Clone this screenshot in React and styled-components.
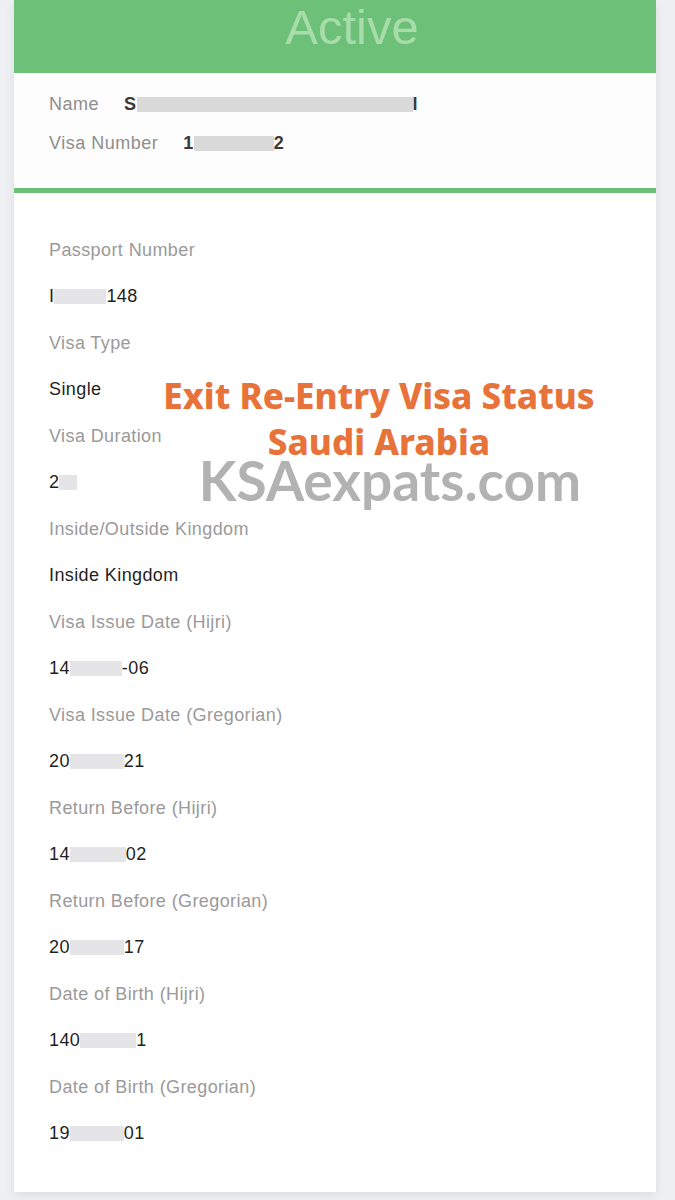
import React from "react";
import styled, { createGlobalStyle } from "styled-components";

const GlobalStyle = createGlobalStyle`
  html, body {
    margin: 0;
    padding: 0;
    background: #eff0f3;
  }
  body {
    font-family: "Liberation Sans", Arial, sans-serif;
  }
`;

const Page = styled.div`
  width: 675px;
  min-height: 1200px;
  padding: 0 19px 0 14px;
  box-sizing: border-box;
`;

const Card = styled.div`
  position: relative;
  background: #ffffff;
  box-shadow: 0 4px 10px rgba(0, 0, 0, 0.08);
`;

const StatusBar = styled.div`
  height: 73px;
  box-sizing: border-box;
  background: #6cc077;
  color: #a8dcaa;
  font-size: 49px;
  line-height: 55px;
  text-align: center;
  padding-left: 34px;
`;

const Summary = styled.div`
  background: #fcfdfc;
  padding: 12px 35px 25px;
  border-bottom: 5px solid #6cc077;
`;

const SummaryRow = styled.div`
  display: flex;
  align-items: center;
  gap: 25px;
  height: 39px;
  font-size: 18px;
  letter-spacing: 0.5px;
`;

const SummaryLabel = styled.span`
  color: #8e8e8e;
`;

const SummaryValue = styled.span`
  color: #3a3a3a;
  font-weight: bold;
  display: inline-flex;
  align-items: center;
`;

const Details = styled.div`
  position: relative;
  padding: 34px 35px 35px;
`;

const Line = styled.div`
  height: 46.5px;
  display: flex;
  align-items: center;
  font-size: 18px;
  letter-spacing: 0.4px;
  color: ${(p) => (p.$label ? "#9a9a9a" : "#1f1f1f")};
`;

const Redact = styled.span`
  display: inline-block;
  width: ${(p) => p.$w}px;
  height: 15px;
  background: ${(p) => p.$tone || "#e5e5e8"};
`;

const Watermark = styled.div`
  position: absolute;
  top: 180px;
  left: 85px;
  width: 560px;
  text-align: center;
  pointer-events: none;
`;

const Headline = styled.div`
  color: #e8733a;
  font-family: "Noto Sans", "DejaVu Sans", sans-serif;
  font-weight: 800;
  font-size: 35px;
  line-height: 46px;
`;

const Site = styled.div`
  color: #b2b2b2;
  font-family: Lato, "Open Sans", sans-serif;
  font-weight: 700;
  font-size: 55px;
  line-height: 30px;
  margin-left: 22px;
`;

const fields = [
  ["Passport Number", [["I", 0], [null, 52], ["148", 0]]],
  ["Visa Type", [["Single", 0]]],
  ["Visa Duration", [["2", 0], [null, 18]]],
  ["Inside/Outside Kingdom", [["Inside Kingdom", 0]]],
  ["Visa Issue Date (Hijri)", [["14", 0], [null, 52], ["-06", 0]]],
  ["Visa Issue Date (Gregorian)", [["20", 0], [null, 54], ["21", 0]]],
  ["Return Before (Hijri)", [["14", 0], [null, 56], ["02", 0]]],
  ["Return Before (Gregorian)", [["20", 0], [null, 54], ["17", 0]]],
  ["Date of Birth (Hijri)", [["140", 0], [null, 56], ["1", 0]]],
  ["Date of Birth (Gregorian)", [["19", 0], [null, 54], ["01", 0]]],
];

const renderParts = (parts, tone) =>
  parts.map(([text, w], i) =>
    text === null ? <Redact key={i} $w={w} $tone={tone} /> : <span key={i}>{text}</span>
  );

const App = () => {
  return (
    <Page>
      <GlobalStyle />
      <Card>
        <StatusBar>Active</StatusBar>
        <Summary>
          <SummaryRow>
            <SummaryLabel>Name</SummaryLabel>
            <SummaryValue>
              S<Redact $w={276} $tone="#d9d9d9" />I
            </SummaryValue>
          </SummaryRow>
          <SummaryRow>
            <SummaryLabel>Visa Number</SummaryLabel>
            <SummaryValue>
              1<Redact $w={80} $tone="#d9d9d9" />2
            </SummaryValue>
          </SummaryRow>
        </Summary>
        <Details>
          {fields.map(([label, parts]) => (
            <React.Fragment key={label}>
              <Line $label>{label}</Line>
              <Line>{renderParts(parts)}</Line>
            </React.Fragment>
          ))}
          <Watermark>
            <Headline>Exit Re-Entry Visa Status</Headline>
            <Headline>Saudi Arabia</Headline>
            <Site>KSAexpats.com</Site>
          </Watermark>
        </Details>
      </Card>
    </Page>
  );
};

export default App;
